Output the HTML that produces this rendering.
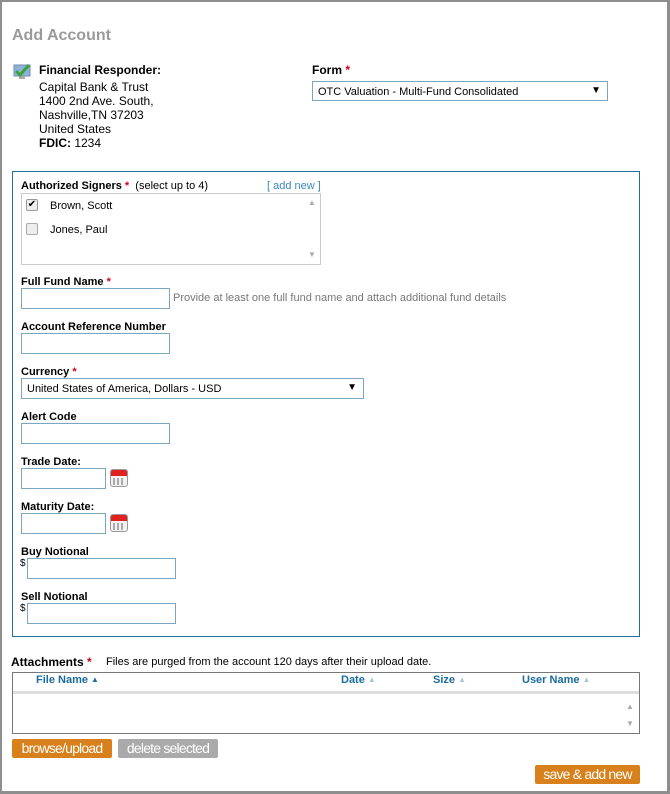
<!DOCTYPE html><html><head><style>
*{box-sizing:border-box;margin:0;padding:0}
body{width:670px;height:794px;background:#fff;font-family:"Liberation Sans",Arial,sans-serif;font-size:12px;color:#000;position:relative;overflow:hidden}
.frame{position:absolute;left:0;top:0;width:670px;height:794px;border:2px solid #8e8e8e;border-right-width:3px;border-bottom-width:3px}
.a{position:absolute;white-space:nowrap}
.b{font-weight:bold;font-size:11px}
.req{color:#d0021b;font-weight:bold}
.in{position:absolute;border:1px solid #7aa6c2;background:#fff;height:21px}
.sel{position:absolute;border:1px solid #7aa6c2;background:#fff;font-size:11px;padding:4px 5px;height:20px}
.sel i{position:absolute;right:6px;top:3px;font-style:normal;font-size:10px}
.btn{position:absolute;color:#fff;font-size:14px;letter-spacing:-0.8px;text-align:center;line-height:19px;border-radius:2px;height:19px}
.cal{position:absolute;width:18px;height:18px;border:1px solid #999;border-radius:3px;background:#f2f2f2;overflow:hidden}
.cal:before{content:"";position:absolute;left:0;top:0;right:0;height:6px;background:#e0221f}
.cal:after{content:"";position:absolute;left:2px;top:8px;width:12px;height:7px;background:repeating-linear-gradient(90deg,#aaa 0 2px,transparent 2px 4px)}
.th{position:absolute;top:674px;color:#1a6c9c;font-weight:bold;font-size:11px}
.ar{display:inline-block;font-size:8px;color:#a9c7dc;vertical-align:1px}
</style></head><body>
<div class="frame"></div>
<div class="a" style="left:12px;top:27px;font-size:16px;font-weight:bold;color:#9a9a9a">Add Account</div>
<svg class="a" style="left:13px;top:62px" width="19" height="19" viewBox="0 0 19 19"><rect x="1" y="3" width="16" height="11" fill="#8fb3d6" stroke="#6b8eb0"/><rect x="6" y="14" width="6" height="3" fill="#aaa"/><path d="M3 9l4 4 9-10" stroke="#3aa33a" stroke-width="3" fill="none"/></svg>
<div class="a" style="left:39px;top:63px;font-weight:bold;font-size:12px">Financial Responder:</div>
<div class="a" style="left:39px;top:80px;line-height:14px;font-size:12px">Capital Bank &amp; Trust<br>1400 2nd Ave. South,<br>Nashville,TN 37203<br>United States<br><b>FDIC:</b> 1234</div>
<div class="a" style="left:312px;top:63px;font-weight:bold;font-size:12px">Form <span class="req">*</span></div>
<div class="sel" style="left:312px;top:81px;width:296px">OTC Valuation - Multi-Fund Consolidated<i>▼</i></div>

<div class="a" style="left:12px;top:171px;width:628px;height:466px;border:1px solid #1f6f9f"></div>
<div class="a b" style="left:21px;top:180px">Authorized Signers <span class="req">*</span> <span style="font-weight:normal">&nbsp;(select up to 4)</span></div>
<div class="a" style="left:267px;top:180px;font-size:11px;color:#3b87b8">[ add new ]</div>
<div class="a" style="left:21px;top:193px;width:300px;height:72px;border:1px solid #ccc"></div>
<div class="a" style="left:26px;top:199px;width:12px;height:12px;border:1px solid #999;border-radius:2px;background:#eee;font-size:10px;line-height:10px;text-align:center">✔</div>
<div class="a" style="left:50px;top:200px;font-size:11px">Brown, Scott</div>
<div class="a" style="left:26px;top:223px;width:12px;height:12px;border:1px solid #aaa;border-radius:2px;background:#eee"></div>
<div class="a" style="left:50px;top:224px;font-size:11px">Jones, Paul</div>
<div class="a" style="left:308px;top:198px;font-size:8px;color:#aaa">▲</div>
<div class="a" style="left:308px;top:250px;font-size:8px;color:#aaa">▼</div>

<div class="a b" style="left:21px;top:276px">Full Fund Name <span class="req">*</span></div>
<div class="in" style="left:21px;top:288px;width:149px"></div>
<div class="a" style="left:173px;top:292px;font-size:11px;color:#777">Provide at least one full fund name and attach additional fund details</div>
<div class="a b" style="left:21px;top:321px">Account Reference Number</div>
<div class="in" style="left:21px;top:333px;width:149px"></div>
<div class="a b" style="left:21px;top:366px">Currency <span class="req">*</span></div>
<div class="sel" style="left:21px;top:378px;width:343px;height:21px">United States of America, Dollars - USD<i>▼</i></div>
<div class="a b" style="left:21px;top:411px">Alert Code</div>
<div class="in" style="left:21px;top:423px;width:149px"></div>
<div class="a b" style="left:21px;top:456px">Trade Date:</div>
<div class="in" style="left:21px;top:468px;width:85px"></div>
<div class="cal" style="left:110px;top:469px"></div>
<div class="a b" style="left:21px;top:501px">Maturity Date:</div>
<div class="in" style="left:21px;top:513px;width:85px"></div>
<div class="cal" style="left:110px;top:514px"></div>
<div class="a b" style="left:21px;top:546px">Buy Notional</div>
<div class="a" style="left:20px;top:558px;font-size:10px">$</div>
<div class="in" style="left:27px;top:558px;width:149px"></div>
<div class="a b" style="left:21px;top:591px">Sell Notional</div>
<div class="a" style="left:20px;top:603px;font-size:10px">$</div>
<div class="in" style="left:27px;top:603px;width:149px"></div>

<div class="a" style="left:11px;top:655px;font-weight:bold;font-size:12px">Attachments <span class="req">*</span></div>
<div class="a" style="left:106px;top:656px;font-size:11px">Files are purged from the account 120 days after their upload date.</div>
<div class="a" style="left:12px;top:672px;width:628px;height:62px;border:1px solid #777"></div>
<div class="a" style="left:13px;top:691px;width:626px;height:3px;background:#ddd"></div>
<div class="th" style="left:36px">File Name <span class="ar" style="color:#1a6c9c">▲</span></div>
<div class="th" style="left:341px">Date <span class="ar">▲</span></div>
<div class="th" style="left:433px">Size <span class="ar">▲</span></div>
<div class="th" style="left:522px">User Name <span class="ar">▲</span></div>
<div class="a" style="left:626px;top:702px;font-size:8px;color:#aaa">▲</div>
<div class="a" style="left:626px;top:719px;font-size:8px;color:#aaa">▼</div>
<div class="btn" style="left:12px;top:739px;width:100px;background:#d8801c">browse/upload</div>
<div class="btn" style="left:118px;top:739px;width:100px;background:#aaa">delete selected</div>
<div class="btn" style="left:535px;top:765px;width:105px;background:#d8801c">save &amp; add new</div>
</body></html>
